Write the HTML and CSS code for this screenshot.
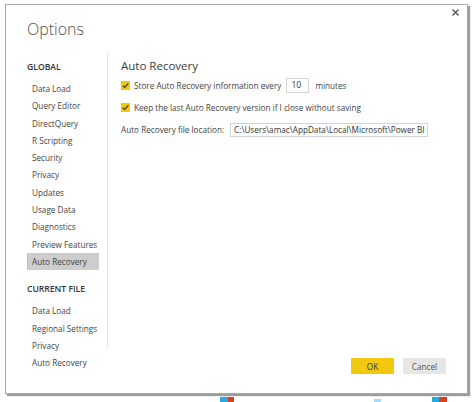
FILE: index.html
```html
<!DOCTYPE html>
<html>
<head>
<meta charset="utf-8">
<link rel="stylesheet" href="styles.css">
</head>
<body>
<div class="dialog">
  <div class="header">
    <div class="title">Options</div>
    <div class="close" aria-label="Close">
      <svg width="7" height="7" viewBox="0 0 7 7"><path d="M0.5 0.5 L6.5 6.5 M6.5 0.5 L0.5 6.5" stroke="#555" stroke-width="1.4" fill="none"/></svg>
    </div>
  </div>
  <div class="body">
    <nav class="nav">
      <div class="section">GLOBAL</div>
      <div class="item">Data Load</div>
      <div class="item">Query Editor</div>
      <div class="item">DirectQuery</div>
      <div class="item">R Scripting</div>
      <div class="item">Security</div>
      <div class="item">Privacy</div>
      <div class="item">Updates</div>
      <div class="item">Usage Data</div>
      <div class="item">Diagnostics</div>
      <div class="item">Preview Features</div>
      <div class="item active">Auto Recovery</div>
      <div class="section second">CURRENT FILE</div>
      <div class="item">Data Load</div>
      <div class="item">Regional Settings</div>
      <div class="item">Privacy</div>
      <div class="item">Auto Recovery</div>
    </nav>
    <div class="content">
      <div class="heading">Auto Recovery</div>
      <div class="row row1">
        <span class="check"><svg width="9" height="9" viewBox="0 0 9 9"><path d="M1.8 4.6 L3.7 6.4 L7.3 2.4" stroke="#3a3a3a" stroke-width="1.3" fill="none"/></svg></span>
        <span class="label">Store Auto Recovery information every</span>
        <span class="num">10</span>
        <span class="label">minutes</span>
      </div>
      <div class="row row2">
        <span class="check"><svg width="9" height="9" viewBox="0 0 9 9"><path d="M1.8 4.6 L3.7 6.4 L7.3 2.4" stroke="#3a3a3a" stroke-width="1.3" fill="none"/></svg></span>
        <span class="label">Keep the last Auto Recovery version if I close without saving</span>
      </div>
      <div class="row row3">
        <span class="label">Auto Recovery file location:</span>
        <span class="path">C:\Users\amac\AppData\Local\Microsoft\Power BI</span>
      </div>
    </div>
  </div>
  <div class="footer">
    <button class="btn ok">OK</button>
    <button class="btn cancel">Cancel</button>
  </div>
</div>
<div class="strip">
  <span class="bit b1"></span><span class="bit r1"></span>
  <span class="bit lb"></span>
  <span class="bit b2"></span><span class="bit r2"></span>
</div>
</body>
</html>
```
FILE: styles.css
```css
html, body {
  margin: 0;
  padding: 0;
  background: #ffffff;
}
body {
  font-family: "Open Sans", "Noto Sans", sans-serif;
  color: #444;
  width: 474px;
  height: 402px;
  overflow: hidden;
}
.dialog {
  margin: 4px 0 0 5px;
  width: 461px;
  height: 388px;
  border: 1px solid #a8a8a8;
  box-shadow: 2px 2px 1px #9c9c9c;
  background: #fff;
  display: flex;
  flex-direction: column;
}
.header {
  height: 48px;
  display: flex;
  justify-content: space-between;
  align-items: flex-start;
  padding: 0 8px 0 21px;
}
.title {
  margin-top: 14px;
  font-size: 16px;
  line-height: 20px;
  font-weight: 300;
  color: #505050;
}
.close {
  margin-top: 4px;
  width: 7px;
  height: 7px;
  display: flex;
}
.body {
  display: flex;
  align-items: flex-start;
  padding-left: 21px;
  height: 296px;
}
.nav {
  width: 80px;
  flex: none;
  font-size: 8.2px;
  padding-top: 6px;
}
.section {
  font-weight: 600;
  color: #333;
  line-height: 17.3px;
  margin-bottom: 3.7px;
  font-size: 8.6px;
}
.section.second {
  margin-top: 10.5px;
  margin-bottom: 4.3px;
}
.item {
  width: 67px;
  padding-left: 5px;
  line-height: 17.3px;
  height: 17.3px;
  white-space: nowrap;
  color: #444;
}
.item.active {
  background: #cdcdcd;
  box-shadow: inset 1px 0 0 #f2c811;
}
.content {
  border-left: 1px solid #e6e6e6;
  height: 295px;
  padding-left: 13px;
  flex: 1;
  font-size: 8.2px;
  color: #444;
}
.heading {
  margin-top: 5px;
  font-size: 11.5px;
  line-height: 15px;
  color: #3c3c3c;
}
.row {
  display: flex;
  align-items: center;
  white-space: nowrap;
}
.row1 {
  margin-top: 5px;
  height: 15px;
}
.row2 {
  margin-top: 7px;
  height: 15px;
}
.row3 {
  margin-top: 7.5px;
  height: 14px;
}
.check {
  width: 9px;
  height: 9px;
  background: #f2c811;
  display: flex;
  margin-right: 4px;
}
.num {
  height: 13px;
  border: 1px solid #d4d4d4;
  margin: 0 6px 0 5px;
  font-size: 8.6px;
  line-height: 13px;
  padding-left: 4px;
  box-sizing: content-box;
  width: 17px;
  color: #333;
}
.path {
  margin-left: 6px;
  width: 193px;
  height: 12px;
  border: 1px solid #d4d4d4;
  padding-left: 3px;
  font-size: 8.2px;
  line-height: 12px;
  white-space: nowrap;
  color: #333;
}
.footer {
  margin-top: auto;
  display: flex;
  justify-content: flex-end;
  gap: 9px;
  padding: 0 21px 19px 0;
}
.btn {
  width: 43px;
  height: 16px;
  border: none;
  padding: 0;
  margin: 0;
  font-family: "Open Sans", "Noto Sans", sans-serif;
  font-size: 8.2px;
  color: #333;
}
.ok {
  background: #f2c811;
}
.cancel {
  background: #e6e6e6;
  color: #555;
}
.strip {
  display: flex;
  margin-top: 3px;
  height: 5px;
}
.bit {
  display: block;
  height: 5px;
}
.b1 { margin-left: 220px; width: 8px; background: #29a8e0; }
.r1 { width: 6px; background: #d8401e; }
.lb { margin-left: 140px; width: 7px; background: #a8dcf2; margin-top: 2px; height: 3px; }
.b2 { margin-left: 51px; width: 7px; background: #29a8e0; }
.r2 { width: 8px; background: #d8401e; }
```
